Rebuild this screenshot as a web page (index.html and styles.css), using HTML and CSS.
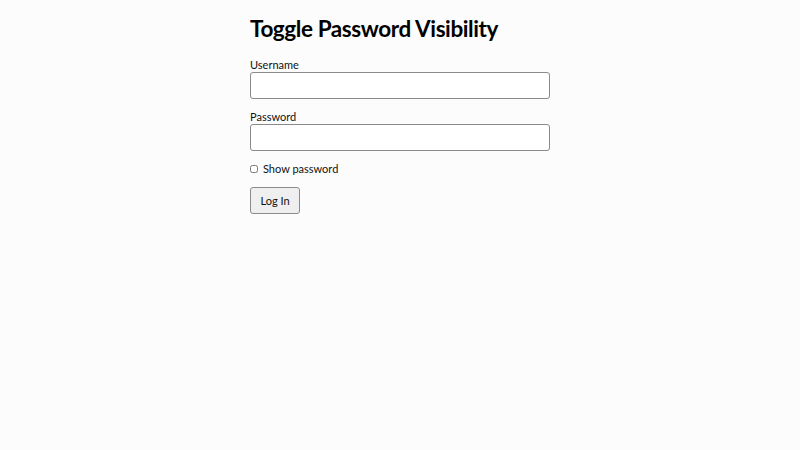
FILE: index.html
```html
<!DOCTYPE html>
<html lang="en">
<head>
<meta charset="utf-8">
<title>Toggle Password Visibility</title>
<link rel="stylesheet" href="styles.css">
</head>
<body>
<main class="page">
  <h1 class="title">Toggle Password Visibility</h1>
  <form class="login">
    <div class="field">
      <label class="label" for="username">Username</label>
      <input class="input" type="text" id="username">
    </div>
    <div class="field">
      <label class="label" for="password">Password</label>
      <input class="input" type="password" id="password">
    </div>
    <label class="toggle">
      <input class="check" type="checkbox" id="show">
      <span>Show password</span>
    </label>
    <button class="btn" type="button">Log In</button>
  </form>
</main>
<script>
  document.getElementById('show').addEventListener('change', function (e) {
    document.getElementById('password').type = e.target.checked ? 'text' : 'password';
  });
</script>
</body>
</html>
```
FILE: styles.css
```css
html, body {
  margin: 0;
  padding: 0;
  background: #fcfcfc;
}

body {
  font-family: Lato, "Open Sans", sans-serif;
  color: #111;
}

.page {
  width: 300px;
  margin: 0 auto;
  padding-top: 16px;
}

.title {
  margin: 0 0 16px;
  font-size: 22.5px;
  font-weight: 700;
  line-height: 26px;
  letter-spacing: -0.4px;
  color: #000;
}

.login {
  display: flex;
  flex-direction: column;
  align-items: flex-start;
}

.field {
  display: flex;
  flex-direction: column;
  width: 100%;
  margin-bottom: 11px;
}

.label {
  font-size: 11px;
  line-height: 13px;
  margin-bottom: 1px;
}

.input {
  box-sizing: border-box;
  width: 300px;
  height: 27px;
  margin: 0;
  border: 1px solid #8a8a8a;
  border-radius: 3px;
  background: #fff;
  font: inherit;
}

.toggle {
  display: flex;
  align-items: center;
  gap: 5px;
  font-size: 11px;
  line-height: 14px;
}

.check {
  width: 8px;
  height: 8px;
  margin: 0;
}

.btn {
  margin-top: 11px;
  box-sizing: border-box;
  width: 50px;
  height: 27px;
  padding: 0;
  border: 1px solid #8a8a8a;
  border-radius: 3px;
  background: #efefef;
  font-family: inherit;
  font-size: 11px;
  color: #111;
}
```
